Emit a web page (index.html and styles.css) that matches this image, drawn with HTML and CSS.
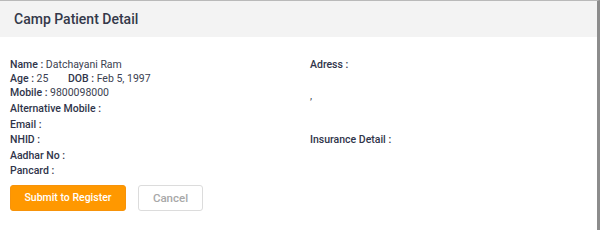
FILE: index.html
```html
<!DOCTYPE html>
<html lang="en">
<head>
    <meta charset="UTF-8">
    <title>Camp Patient Detail</title>
    <link rel="stylesheet" href="styles.css">
</head>
<body>
    <div class="modal">
        <div class="modal-header">Camp Patient Detail</div>
        <div class="modal-body">
            <div class="col">
                <div class="group tight">
                    <div class="row"><b>Name :</b> Datchayani Ram</div>
                    <div class="row"><b>Age :</b> 25 <span class="dob"><b>DOB :</b> Feb 5, 1997</span></div>
                    <div class="row"><b>Mobile :</b> 9800098000</div>
                </div>
                <div class="group loose">
                    <div class="row"><b>Alternative Mobile :</b></div>
                    <div class="row"><b>Email :</b></div>
                    <div class="row"><b>NHID :</b></div>
                    <div class="row"><b>Aadhar No :</b></div>
                    <div class="row"><b>Pancard :</b></div>
                </div>
            </div>
            <div class="col">
                <div class="row"><b>Adress :</b></div>
                <div class="row address">,</div>
                <div class="row insurance"><b>Insurance Detail :</b></div>
            </div>
        </div>
        <div class="modal-footer">
            <button class="btn btn-submit">Submit to Register</button>
            <button class="btn btn-cancel">Cancel</button>
        </div>
    </div>
</body>
</html>
```

FILE: styles.css
```css
body {
    margin: 0;
    font-family: Roboto, "Liberation Sans", sans-serif;
    background-color: #fff;
    color: #3b4151;
}

.modal {
    height: 230px;
    border-top: 1px solid #b9b9b9;
    border-right: 3px solid #8c8c8c;
    box-sizing: border-box;
}

.modal-header {
    height: 36px;
    line-height: 36px;
    padding-left: 14px;
    background-color: #f3f3f3;
    font-size: 14px;
    font-weight: 500;
    color: #34394a;
}

.modal-body {
    display: grid;
    grid-template-columns: 300px 1fr;
    padding: 21px 10px 0 10px;
    font-size: 10.5px;
}

.row b {
    font-weight: 500;
    color: #30354a;
}

.col .row {
    line-height: 14px;
}

.group.loose {
    margin-top: 1px;
}

.col .loose .row {
    line-height: 15.5px;
}

.dob {
    margin-left: 17px;
}

.address {
    margin-top: 17px;
}

.insurance {
    margin-top: 30px;
}

.modal-footer {
    display: flex;
    gap: 12px;
    padding: 6px 10px;
}

.btn {
    height: 26px;
    border-radius: 3px;
    font-family: Roboto, "Liberation Sans", sans-serif;
    font-size: 10.5px;
    font-weight: 500;
    cursor: pointer;
}

.btn-submit {
    width: 116px;
    background-color: #ff9800;
    color: #fff;
    border: 1px solid #f7930a;
}

.btn-cancel {
    width: 65px;
    background-color: #fff;
    color: #a8a8a8;
    border: 1px solid #dcdcdc;
    font-size: 11.5px;
}
```
